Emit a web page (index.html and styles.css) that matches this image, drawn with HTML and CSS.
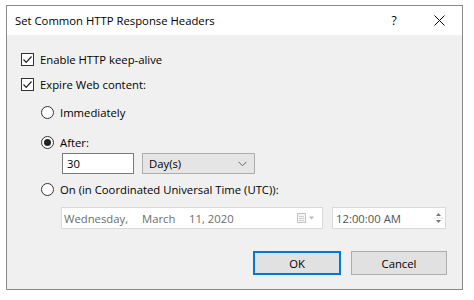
FILE: index.html
```
<!DOCTYPE html>
<html>
<head>
<meta charset="utf-8">
<link rel="stylesheet" href="styles.css">
</head>
<body>
<div class="dialog">
  <div class="titlebar">
    <span class="title">Set Common HTTP Response Headers</span>
    <span class="help">?</span>
    <span class="close"><svg width="11" height="11" viewBox="0 0 11 11"><path d="M0.5 0.5 L10.5 10.5 M10.5 0.5 L0.5 10.5" stroke="#000" stroke-width="1" fill="none"/></svg></span>
  </div>
  <div class="content">
    <label class="row row-check1">
      <span class="check"><svg width="11" height="11" viewBox="0 0 11 11"><path d="M1.5 5.5 L4.2 8.3 L9.5 2.5" stroke="#222" stroke-width="1.2" fill="none"/></svg></span>
      <span>Enable HTTP keep-alive</span>
    </label>
    <label class="row row-check2">
      <span class="check"><svg width="11" height="11" viewBox="0 0 11 11"><path d="M1.5 5.5 L4.2 8.3 L9.5 2.5" stroke="#222" stroke-width="1.2" fill="none"/></svg></span>
      <span>Expire Web content:</span>
    </label>
    <label class="row radio-row row-r1">
      <span class="radio"></span>
      <span>Immediately</span>
    </label>
    <label class="row radio-row row-r2">
      <span class="radio"><span class="dot"></span></span>
      <span>After:</span>
    </label>
    <div class="row inputs-row">
      <span class="textbox">30</span>
      <span class="select"><span>Day(s)</span><svg width="9" height="6" viewBox="0 0 9 6"><path d="M0.5 0.8 L4.5 4.8 L8.5 0.8" stroke="#666" stroke-width="1" fill="none"/></svg></span>
    </div>
    <label class="row radio-row row-r3">
      <span class="radio"></span>
      <span>On (in Coordinated Universal Time (UTC)):</span>
    </label>
    <div class="row date-row">
      <span class="datebox">
        <span class="d1">Wednesday,</span><span class="d2">March</span><span class="d3">11, 2020</span>
        <span class="cal"><svg width="18" height="10" viewBox="0 0 18 10"><rect x="0.5" y="0.5" width="8" height="9" fill="#f4f4f4" stroke="#c4c4c4"/><path d="M2 3.5 H7 M2 5.5 H7 M2 7.5 H7" stroke="#d0d0d0" stroke-width="1"/><path d="M12 3.5 L17 3.5 L14.5 6.5 Z" fill="#b8b8b8"/></svg></span>
      </span>
      <span class="timebox">
        <span>12:00:00 AM</span>
        <span class="spin"><svg width="9" height="16" viewBox="0 0 9 16"><path d="M2 6 L4.5 3 L7 6 Z" fill="#777"/><path d="M2 10 L4.5 13 L7 10 Z" fill="#777"/><path d="M0 8 H9" stroke="#e2e2e2"/></svg></span>
      </span>
    </div>
    <div class="buttons">
      <button class="btn ok">OK</button>
      <button class="btn cancel">Cancel</button>
    </div>
  </div>
</div>
</body>
</html>
```
FILE: styles.css
```
* {
  box-sizing: border-box;
}
html, body {
  margin: 0;
  padding: 0;
  background: #ffffff;
}
body {
  font-family: "Open Sans", "Noto Sans", sans-serif;
  font-size: 11.3px;
  color: #000;
  width: 474px;
  height: 300px;
  overflow: hidden;
}
.dialog {
  margin: 5px 0 0 6px;
  width: 457px;
  height: 285px;
  border: 1px solid #8a8a8a;
  background: #f0f0f0;
  display: flex;
  flex-direction: column;
}
.titlebar {
  height: 29px;
  background: #ffffff;
  display: flex;
  align-items: center;
  padding-left: 8px;
  padding-bottom: 1px;
}
.title {
  flex: 1;
}
.help {
  width: 12px;
  text-align: center;
  margin-right: 34px;
  font-size: 12px;
}
.close {
  width: 11px;
  height: 11px;
  display: flex;
  margin-right: 17px;
}
.content {
  flex: 1;
  display: flex;
  flex-direction: column;
  padding: 12px 0 0 14px;
}
.row {
  display: flex;
  align-items: center;
  height: 24px;
}
.row-check2 { margin-top: 1px; }
.check {
  width: 13px;
  height: 13px;
  border: 1px solid #333;
  background: #fff;
  margin-right: 6px;
  display: flex;
}
.radio-row { padding-left: 20px; }
.row-r1 { margin-top: 4px; }
.row-r2 { margin-top: 6px; }
.row-r3 { margin-top: 3px; }
.radio {
  width: 13px;
  height: 13px;
  border: 1px solid #333;
  border-radius: 50%;
  background: #fff;
  margin-right: 6px;
  display: flex;
  align-items: center;
  justify-content: center;
}
.dot {
  width: 7px;
  height: 7px;
  border-radius: 50%;
  background: #222;
}
.inputs-row {
  height: 21px;
  margin-top: -1px;
  padding-left: 41px;
}
.textbox {
  width: 72px;
  height: 21px;
  border: 1px solid #7a7a7a;
  background: #fff;
  padding-left: 4px;
  display: flex;
  align-items: center;
}
.select {
  margin-left: 8px;
  width: 113px;
  height: 21px;
  border: 1px solid #adadad;
  background: #e5e5e5;
  padding-left: 6px;
  padding-right: 7px;
  display: flex;
  align-items: center;
  justify-content: space-between;
}
.date-row {
  height: 22px;
  margin-top: 6px;
  padding-left: 40px;
  color: #6d6d6d;
}
.datebox {
  width: 262px;
  height: 22px;
  border: 1px solid #d9d9d9;
  background: #fff;
  display: flex;
  align-items: center;
  padding-left: 2px;
  padding-right: 2px;
}
.d1 { width: 78px; }
.d2 { width: 47px; }
.d3 { flex: 1; }
.cal { display: flex; margin-right: 5px; }
.timebox {
  margin-left: 9px;
  width: 114px;
  height: 22px;
  border: 1px solid #d9d9d9;
  background: #fff;
  display: flex;
  align-items: center;
  justify-content: space-between;
  padding-left: 3px;
  padding-right: 2px;
  color: #555;
}
.spin { display: flex; }
.buttons {
  display: flex;
  justify-content: flex-end;
  margin-top: 22px;
  padding-right: 15px;
  gap: 10px;
}
.btn {
  font-family: inherit;
  font-size: 11.3px;
  color: #000;
  background: #e1e1e1;
  height: 24px;
  padding: 0;
  margin: 0;
}
.ok {
  width: 88px;
  border: 2px solid #0078d7;
}
.cancel {
  width: 96px;
  border: 1px solid #adadad;
}
```
